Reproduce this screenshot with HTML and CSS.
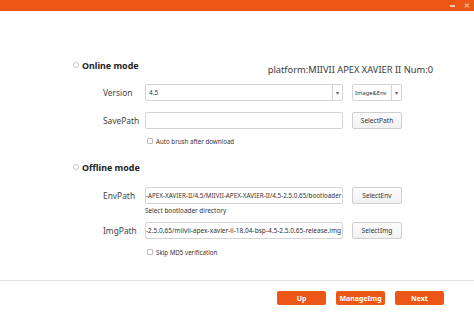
FILE: index.html
```html
<!DOCTYPE html>
<html>
<head>
<meta charset="utf-8">
<link rel="stylesheet" href="styles.css">
</head>
<body>
<div class="window">
  <div class="titlebar">
    <span class="tb-min"></span>
    <span class="tb-close">✕</span>
  </div>
  <div class="content">
    <div class="mode-row r-online">
      <span class="radio"></span><span class="mode-title">Online mode</span>
      <span class="platform">platform:MIIVII APEX XAVIER II Num:0</span>
    </div>
    <div class="form-row r-version">
      <span class="label">Version</span>
      <div class="combo wide"><span class="combo-text">4.5</span><span class="combo-arrow">▾</span></div>
      <div class="combo small"><span class="combo-text">Image&amp;Env</span><span class="combo-arrow">▾</span></div>
    </div>
    <div class="form-row r-save">
      <span class="label">SavePath</span>
      <div class="input"></div>
      <div class="btn">SelectPath</div>
    </div>
    <div class="check-row r-auto">
      <span class="checkbox"></span><span class="check-text">Auto brush after download</span>
    </div>
    <div class="mode-row r-offline">
      <span class="radio"></span><span class="mode-title">Offline mode</span>
    </div>
    <div class="form-row r-env">
      <span class="label">EnvPath</span>
      <div class="input"><span class="input-text">-APEX-XAVIER-II/4.5/MIIVII-APEX-XAVIER-II/4.5-2.5.0.65/bootloader</span></div>
      <div class="btn">SelectEnv</div>
    </div>
    <div class="hint">Select bootloader directory</div>
    <div class="form-row r-img">
      <span class="label">ImgPath</span>
      <div class="input"><span class="input-text img">-2.5.0.65/miivii-apex-xavier-ii-18.04-bsp-4.5-2.5.0.65-release.img</span></div>
      <div class="btn">SelectImg</div>
    </div>
    <div class="check-row r-skip">
      <span class="checkbox"></span><span class="check-text">Skip MD5 verification</span>
    </div>
  </div>
  <div class="footer">
    <div class="obtn">Up</div>
    <div class="obtn">ManageImg</div>
    <div class="obtn">Next</div>
  </div>
</div>
</body>
</html>
```
FILE: styles.css
```css
* { box-sizing: border-box; }
html, body { margin: 0; padding: 0; background: #fff; }
body { font-family: "Noto Sans", "Open Sans", sans-serif; color: #333; }
.window { width: 474px; height: 317px; display: flex; flex-direction: column; background: #fff; }
.titlebar { height: 11px; background: #ec5718; display: flex; align-items: center; justify-content: flex-end; gap: 9px; padding-right: 4px; }
.tb-min { width: 5px; height: 2px; background: #f6c3a8; }
.tb-close { color: #f6c3a8; font-size: 7px; line-height: 7px; font-weight: bold; }
.content { flex: 1; padding-left: 72px; display: flex; flex-direction: column; }
.mode-row { display: flex; align-items: center; height: 14px; }
.r-online { margin-top: 47px; }
.r-offline { margin-top: 14px; }
.radio { width: 6px; height: 6px; border: 1px solid #c8c8c8; border-radius: 50%; margin-left: 1px; margin-right: 3px; }
.mode-title { font-size: 8.9px; font-weight: bold; color: #222; }
.platform { font-size: 9.3px; color: #3a3a3a; margin-left: auto; margin-right: 41px; margin-top: 8px; }
.form-row { display: flex; align-items: center; height: 17px; }
.label { width: 73px; padding-left: 31px; text-align: left; font-size: 8.4px; color: #444; }
.r-version { margin-top: 12px; }
.r-save { margin-top: 11px; }
.r-env { margin-top: 13px; }
.r-img { margin-top: 6px; }
.combo, .input { height: 17px; border: 1px solid #d4d4d4; border-radius: 2px; background: #fff; display: flex; align-items: center; overflow: hidden; }
.combo.wide, .input { width: 198px; }
.combo.small { width: 50px; margin-left: 9px; }
.input + .btn { margin-left: 9px; }
.combo-text { flex: 1; font-size: 6.5px; padding-left: 3px; color: #333; white-space: nowrap; overflow: hidden; }
.combo.small .combo-text { font-size: 5.8px; padding-left: 2px; }
.combo-arrow { width: 10px; height: 100%; border-left: 1px solid #d4d4d4; font-size: 6px; color: #666; display: flex; align-items: center; justify-content: center; flex: none; }
.input-text { font-size: 6.3px; color: #333; white-space: nowrap; }
.input-text.img { font-size: 6.55px; }
.btn { width: 50px; height: 17px; border: 1px solid #cfcfcf; border-radius: 2px; background: linear-gradient(#fdfdfd, #f1f1f1); font-size: 6.6px; color: #333; display: flex; align-items: center; justify-content: center; }
.check-row { display: flex; align-items: center; height: 10px; padding-left: 75px; }
.checkbox { width: 6px; height: 6px; border: 1px solid #bdbdbd; border-radius: 1px; margin-right: 3px; }
.check-text { font-size: 6.2px; color: #333; }
.r-auto { margin-top: 7px; }
.r-skip { margin-top: 8px; }
.hint { font-size: 6.4px; color: #333; padding-left: 73px; margin-top: 2px; height: 10px; line-height: 10px; }
.footer { height: 37px; border-top: 1px solid #e4e4e4; display: flex; justify-content: flex-end; align-items: center; gap: 10px; padding-right: 30px; padding-bottom: 2px; }
.obtn { width: 49px; height: 14px; background: #ec5718; border-radius: 2px; color: #fff; font-size: 7px; font-weight: bold; display: flex; align-items: center; justify-content: center; }
```
